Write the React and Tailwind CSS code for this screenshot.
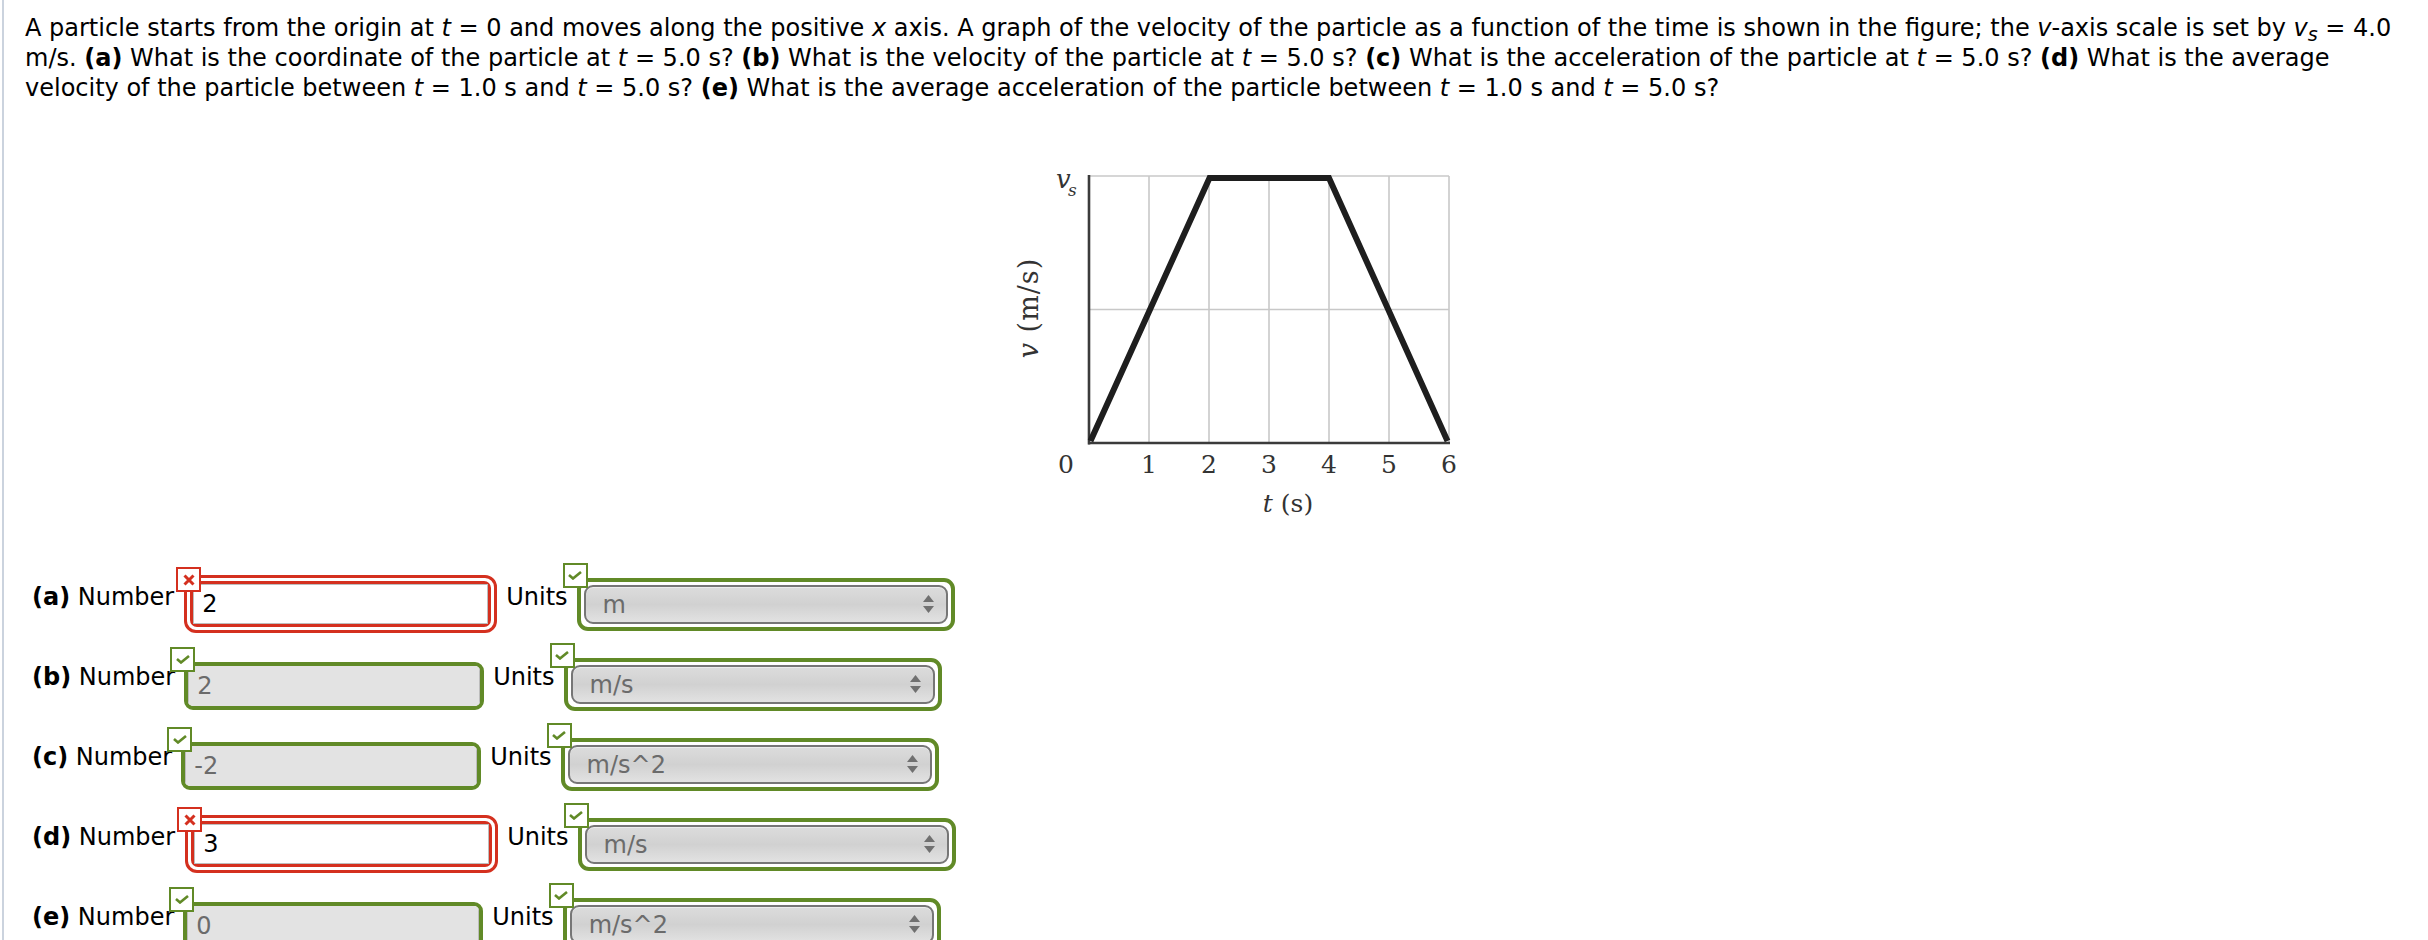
const RED = "#d4301f";
const GREEN = "#618a27";

function XIcon() {
  return (
    <span className="absolute left-[-8px] top-[-8px] w-[25px] h-[25px] border-2 border-[#d4301f] bg-white flex items-center justify-center">
      <svg width="12" height="12" viewBox="0 0 12 12">
        <path d="M1.5 1.5 L10.5 10.5 M10.5 1.5 L1.5 10.5" stroke={RED} strokeWidth="3" strokeLinecap="butt" fill="none" />
      </svg>
    </span>
  );
}

function CheckIcon({ left = -14, top = -15 }) {
  return (
    <span
      className="absolute w-[25px] h-[25px] border-2 border-[#618a27] bg-white flex items-center justify-center"
      style={{ left, top }}
    >
      <svg width="14" height="9" viewBox="0 0 14 9">
        <path d="M1 4 L5 7.5 L13 1" stroke={GREEN} strokeWidth="2.6" fill="none" strokeLinejoin="miter" />
      </svg>
    </span>
  );
}

function RedNumber({ value }) {
  return (
    <div className="relative ml-[10px] mt-[8px]">
      <div className="w-[313px] h-[58px] rounded-[12px] border-[3px] border-[#d4301f] p-[3px] bg-white">
        <div className="h-full rounded-[7px] border-[3px] border-[#d4301f]">
          <div className="h-full border border-[#bdbdbd] bg-white pl-[8px] flex items-center text-black">
            {value}
          </div>
        </div>
      </div>
      <XIcon />
    </div>
  );
}

function GreenNumber({ value }) {
  return (
    <div className="relative ml-[9px] mt-[15px]">
      <div className="w-[300px] h-[48px] rounded-[9px] border-[4px] border-[#618a27] overflow-hidden">
        <div className="h-full bg-[#e3e3e3] border-x border-[#bcbcbc] pl-[8px] flex items-center text-[#6b6b6b]">
          {value}
        </div>
      </div>
      <CheckIcon left={-14} top={-15} />
    </div>
  );
}

function Units({ value }) {
  return (
    <>
      <span className="ml-[9px] mt-[18px] leading-[24px] whitespace-nowrap">Units</span>
      <div className="relative ml-[9px] mt-[11px]">
        <div className="w-[378px] h-[53px] rounded-[11px] border-[4px] border-[#618a27] p-[3px] bg-white">
          <div className="h-full rounded-[9px] border-2 border-[#767676] bg-gradient-to-b from-[#dcdcdc] via-[#d1d1d1] to-[#e2e2e2] shadow-[inset_0_1px_0_#ececec] flex items-center justify-between pl-[17px] pr-[12px] text-[#6b6b6b]">
            <span>{value}</span>
            <svg width="11" height="19" viewBox="0 0 11 19">
              <polygon points="0,7 5.5,0 11,7" fill="#707070" />
              <polygon points="0,11 11,11 5.5,18" fill="#707070" />
            </svg>
          </div>
        </div>
        <CheckIcon left={-14} top={-15} />
      </div>
    </>
  );
}

function Row({ letter, value, unit, ok }) {
  return (
    <div className="flex items-start h-[80px] pl-[28px]">
      <span className="mt-[18px] leading-[24px] whitespace-nowrap">
        <b>({letter})</b> Number
      </span>
      {ok ? <GreenNumber value={value} /> : <RedNumber value={value} />}
      <Units value={unit} />
    </div>
  );
}

function Graph() {
  const grid = [159, 219, 279, 339, 399, 459];
  const serif = "'DejaVu Serif', 'Liberation Serif', serif";
  return (
    <svg width="500" height="390" viewBox="0 0 500 390" className="block">
      <g stroke="#c8c8c8" strokeWidth="1.6">
        {grid.map((x) => (
          <line key={x} x1={x} y1={36} x2={x} y2={303} />
        ))}
        <line x1={99} y1={36} x2={459} y2={36} />
        <line x1={99} y1={169.5} x2={459} y2={169.5} />
      </g>
      <line x1={99} y1={35} x2={99} y2={304.5} stroke="#3b3b3b" strokeWidth="2.6" />
      <line x1={98} y1={303} x2={460} y2={303} stroke="#3b3b3b" strokeWidth="2.6" />
      <polyline
        points="100.5,301 219.5,38 339,38 457.5,301"
        fill="none"
        stroke="#1e1e1e"
        strokeWidth="6"
        strokeLinejoin="miter"
      />
      <g fontFamily={serif} fontSize="25" fill="#333" textAnchor="middle">
        <text x={76} y={333}>0</text>
        {grid.map((x, i) => (
          <text key={x} x={x} y={333}>{i + 1}</text>
        ))}
        <text x={298} y={372}>
          <tspan fontStyle="italic">t</tspan> (s)
        </text>
      </g>
      <g fontFamily={serif} fill="#333">
        <text x={66} y={48} fontSize="26" fontStyle="italic">v</text>
        <text x={78} y={56} fontSize="17" fontStyle="italic">s</text>
        <text
          transform="rotate(-90)"
          x={-168}
          y={48}
          fontSize="27"
          textAnchor="middle"
          letterSpacing="1"
        >
          <tspan fontStyle="italic">v</tspan> (m/s)
        </text>
      </g>
    </svg>
  );
}

export default function App() {
  const I = ({ children }) => <i>{children}</i>;
  return (
    <div className="h-screen overflow-hidden bg-white ml-[2px] border-l-[2px] border-[#cbd3de] font-['DejaVu_Sans','Verdana',sans-serif] text-black">
      <p className="pt-[13px] pl-[21px] text-[24px] leading-[30px]">
        A particle starts from the origin at <I>t</I> = 0 and moves along the positive <I>x</I> axis. A graph of the
        velocity of the particle as a function of the time is shown in the figure; the <I>v</I>-axis scale is set by{" "}
        <I>v</I>
        <sub className="italic text-[0.8em]">s</sub> = 4.0 m/s. <b>(a)</b> What is the coordinate of the particle at{" "}
        <I>t</I> = 5.0 s? <b>(b)</b> What is the velocity of the particle at <I>t</I> = 5.0 s? <b>(c)</b> What is the
        acceleration of the particle at <I>t</I> = 5.0 s? <b>(d)</b> What is the average velocity of the particle between{" "}
        <I>t</I> = 1.0 s and <I>t</I> = 5.0 s? <b>(e)</b> What is the average acceleration of the particle between{" "}
        <I>t</I> = 1.0 s and <I>t</I> = 5.0 s?
      </p>
      <div className="ml-[986px] mt-[37px]">
        <Graph />
      </div>
      <div className="mt-[37px] text-[24px]">
        <Row letter="a" value="2" unit="m" ok={false} />
        <Row letter="b" value="2" unit="m/s" ok={true} />
        <Row letter="c" value="-2" unit="m/s^2" ok={true} />
        <Row letter="d" value="3" unit="m/s" ok={false} />
        <Row letter="e" value="0" unit="m/s^2" ok={true} />
      </div>
    </div>
  );
}
